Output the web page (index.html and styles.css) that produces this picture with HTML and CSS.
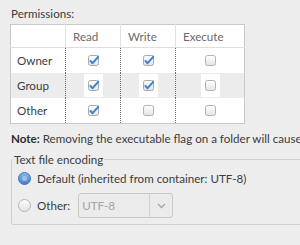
FILE: index.html
```html
<!DOCTYPE html>
<html lang="en">
<head>
  <meta charset="UTF-8" />
  <title>Permissions</title>
  <link rel="stylesheet" href="styles.css">
</head>
<body>
  <svg class="defs" width="0" height="0">
    <defs>
      <linearGradient id="boxFill" x1="0" y1="0" x2="0" y2="1">
        <stop offset="0" stop-color="#ffffff" />
        <stop offset="1" stop-color="#e4e4e4" />
      </linearGradient>
      <linearGradient id="radioOn" x1="0" y1="0" x2="0" y2="1">
        <stop offset="0" stop-color="#8fb8ea" />
        <stop offset="1" stop-color="#3d7fd0" />
      </linearGradient>
      <linearGradient id="radioOff" x1="0" y1="0" x2="0" y2="1">
        <stop offset="0" stop-color="#fdfdfd" />
        <stop offset="1" stop-color="#e2e2e2" />
      </linearGradient>
      <symbol id="cbOn" viewBox="0 0 11 11">
        <rect x="0.5" y="0.5" width="10" height="10" rx="2" fill="url(#boxFill)" stroke="#a9a9a9" />
        <path d="M2.5 6 L4.6 8.2 L10.4 1.6" fill="none" stroke="#3f83d6" stroke-width="2" stroke-linecap="round" stroke-linejoin="round" />
      </symbol>
      <symbol id="cbOff" viewBox="0 0 11 11">
        <rect x="0.5" y="0.5" width="10" height="10" rx="2" fill="url(#boxFill)" stroke="#b2b2b2" />
      </symbol>
    </defs>
  </svg>

  <div class="title">Permissions:</div>

  <table class="perm">
    <colgroup>
      <col class="c-who"><col class="c-bit"><col class="c-bit"><col class="c-exec">
    </colgroup>
    <thead>
      <tr><th></th><th>Read</th><th>Write</th><th>Execute</th></tr>
    </thead>
    <tbody>
      <tr>
        <td class="who">Owner</td>
        <td><span class="cell"><svg class="cb"><use href="#cbOn"/></svg></span></td>
        <td><span class="cell"><svg class="cb"><use href="#cbOn"/></svg></span></td>
        <td><span class="cell"><svg class="cb"><use href="#cbOff"/></svg></span></td>
      </tr>
      <tr class="alt">
        <td class="who">Group</td>
        <td><span class="cell"><svg class="cb"><use href="#cbOn"/></svg></span></td>
        <td><span class="cell"><svg class="cb"><use href="#cbOn"/></svg></span></td>
        <td><span class="cell"><svg class="cb"><use href="#cbOff"/></svg></span></td>
      </tr>
      <tr>
        <td class="who">Other</td>
        <td><span class="cell"><svg class="cb"><use href="#cbOn"/></svg></span></td>
        <td><span class="cell"><svg class="cb"><use href="#cbOff"/></svg></span></td>
        <td><span class="cell"><svg class="cb"><use href="#cbOff"/></svg></span></td>
      </tr>
    </tbody>
  </table>

  <p class="note"><b>Note:</b> Removing the executable flag on a folder will cause all of its contents to become inaccessible.</p>

  <fieldset class="encoding">
    <legend>Text file encoding</legend>
    <label class="opt">
      <svg class="radio" viewBox="0 0 13 13">
        <circle cx="6.5" cy="6.5" r="6" fill="url(#radioOn)" stroke="#3a74bd" />
        <circle cx="6.5" cy="6.5" r="2.6" fill="#ffffff" opacity="0.35" />
      </svg>
      Default (inherited from container: UTF-8)
    </label>
    <div class="opt">
      <svg class="radio" viewBox="0 0 13 13">
        <circle cx="6.5" cy="6.5" r="6" fill="url(#radioOff)" stroke="#b4b4b4" />
      </svg>
      <span>Other:</span>
      <div class="combo">
        <span class="combo-text">UTF-8</span>
        <span class="combo-btn">
          <svg width="9" height="6" viewBox="0 0 9 6"><path d="M1 1 L4.5 4.5 L8 1" fill="none" stroke="#a6a6a6" stroke-width="1.3" /></svg>
        </span>
      </div>
    </div>
  </fieldset>
</body>
</html>
```

FILE: styles.css
```css
body {
  margin: 0;
  padding: 0;
  width: 300px;
  height: 245px;
  overflow: hidden;
  background-color: #ededed;
  color: #3c3c3c;
  font-family: Lato, "Open Sans", sans-serif;
  font-size: 11.6px;
}

.defs {
  position: absolute;
}

.title {
  margin: 6px 0 0 11px;
  line-height: 15px;
}

.perm {
  margin: 3px 0 0 10px;
  width: 235px;
  table-layout: fixed;
  border-collapse: collapse;
  background: white;
  border: 1px solid #c9c9c9;
}

.c-who { width: 55px; }
.c-bit { width: 55px; }
.c-exec { width: 69px; }

.perm th {
  height: 22px;
  padding: 0 0 0 7px;
  text-align: left;
  font-weight: normal;
  color: #6a6a6a;
  border-bottom: 1px solid #dedede;
  border-left: 1px solid #e2e2e2;
}

.perm th:first-child { border-left: none; }

.perm td {
  height: 25px;
  padding: 0;
  text-align: center;
  border-left: 1px dotted #6a6a6a;
}

.perm td.who {
  border-left: none;
  text-align: left;
  padding-left: 6px;
}

.perm tr.alt td { background: #ececec; }

.cell {
  display: inline-flex;
  align-items: center;
  justify-content: center;
  width: 19px;
  height: 23px;
  background: white;
  vertical-align: middle;
}

.cb {
  width: 11px;
  height: 11px;
}

.note {
  margin: 7px 0 0 11px;
  white-space: nowrap;
  line-height: 15px;
}

.note b { color: #2e2e2e; }

.encoding {
  margin: 6px 0 0 11px;
  width: 320px;
  padding: 0 0 5px 6px;
  border: 1px solid #cfcfcf;
  border-radius: 2px;
}

.encoding legend {
  padding: 0 1px;
  margin: 0 0 -2px -5px;
  line-height: 15px;
}

.opt {
  display: flex;
  align-items: center;
  gap: 6px;
  height: 27px;
}

.radio {
  width: 13px;
  height: 13px;
  flex: none;
}

.combo {
  display: flex;
  width: 93px;
  height: 23px;
  margin-left: 2px;
  border: 1px solid #c9c9c9;
  border-radius: 3px;
  background: #ebebeb;
  color: #a4a4a4;
}

.combo-text {
  flex: 1;
  padding-left: 3px;
  line-height: 23px;
}

.combo-btn {
  width: 22px;
  display: flex;
  align-items: center;
  justify-content: center;
  border-left: 1px solid #d2d2d2;
}
```
